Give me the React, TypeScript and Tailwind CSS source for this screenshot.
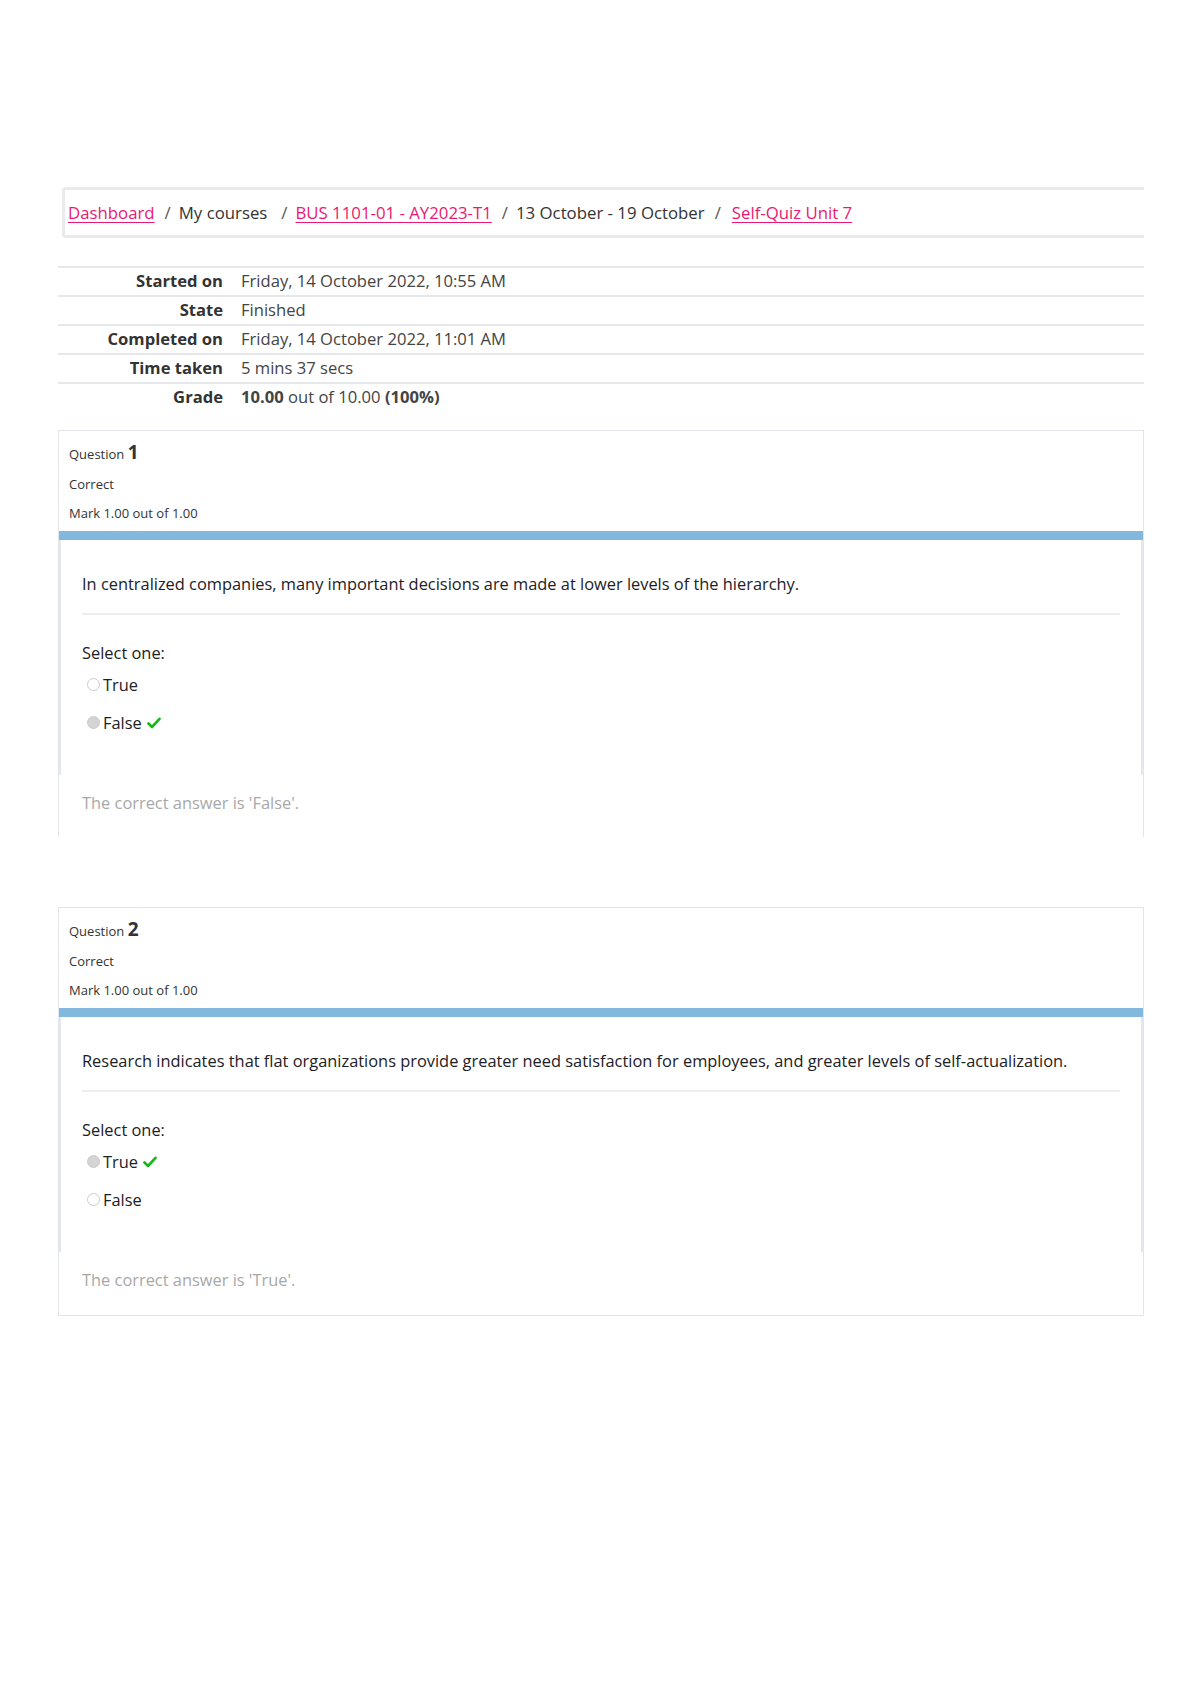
import React from 'react';

type Option = { label: string; checked: boolean; correct: boolean };

type Question = {
  number: number;
  text: string;
  options: Option[];
  answer: string;
  lastOnPage?: boolean;
};

const summary: { label: string; value: React.ReactNode }[] = [
  { label: 'Started on', value: 'Friday, 14 October 2022, 10:55 AM' },
  { label: 'State', value: 'Finished' },
  { label: 'Completed on', value: 'Friday, 14 October 2022, 11:01 AM' },
  { label: 'Time taken', value: '5 mins 37 secs' },
  {
    label: 'Grade',
    value: (
      <>
        <span className="font-bold">10.00</span> out of 10.00 <span className="font-bold">(100%)</span>
      </>
    ),
  },
];

const questions: Question[] = [
  {
    number: 1,
    text: 'In centralized companies, many important decisions are made at lower levels of the hierarchy.',
    options: [
      { label: 'True', checked: false, correct: false },
      { label: 'False', checked: true, correct: true },
    ],
    answer: "The correct answer is 'False'.",
    lastOnPage: true,
  },
  {
    number: 2,
    text: 'Research indicates that flat organizations provide greater need satisfaction for employees, and greater levels of self-actualization.',
    options: [
      { label: 'True', checked: true, correct: true },
      { label: 'False', checked: false, correct: false },
    ],
    answer: "The correct answer is 'True'.",
  },
];

const CheckMark = () => (
  <svg width="14" height="12" viewBox="0 0 14 12" className="ml-[5px]">
    <path d="M1.5 6.5 L5 10 L12.5 1.8" fill="none" stroke="#19b519" strokeWidth="2.6" strokeLinecap="round" strokeLinejoin="round" />
  </svg>
);

const Radio = ({ checked }: { checked: boolean }) => (
  <span
    className={`inline-block w-[13px] h-[13px] rounded-full border ${
      checked ? 'bg-[#d4d4d4] border-[#cacaca]' : 'bg-white border-[#cdcdcd]'
    }`}
  />
);

const Crumb = ({ children }: { children: React.ReactNode }) => (
  <a className="text-[#ec1870] underline underline-offset-[3px] decoration-[1px]">{children}</a>
);

const Sep = ({ before = 0, after = 0 }: { before?: number; after?: number }) => (
  <span className="text-[#555]" style={{ marginLeft: 10 + before, marginRight: 8 + after }}>
    /
  </span>
);

const QuestionCard = ({ q }: { q: Question }) => (
  <div className={`border border-[#e2e5e9] ${q.lastOnPage ? 'border-b-0 h-[407px]' : ''}`}>
    <div className="pl-[10px] pt-[7px] pb-[2px] text-[13px] text-[#333] leading-[29.5px]">
      <div>
        Question <span className="text-[19px] font-bold">{q.number}</span>
      </div>
      <div>Correct</div>
      <div>Mark 1.00 out of 1.00</div>
    </div>
    <div className="h-[9px] bg-[#82b8dd]" />
    <div className="border-x-2 border-[#e4e7eb] px-[21px] pt-[33px] pb-[14px] text-[16.4px] text-[#1d2125] leading-[22px]">
      <div className="pb-[18px] border-b-2 border-[#eceef1]">{q.text}</div>
      <div className="pt-[27px]">Select one:</div>
      <div className="pt-[10px] flex flex-col gap-[16px] pl-[5px]">
        {q.options.map((o) => (
          <div key={o.label} className="flex items-center h-[22px]">
            <Radio checked={o.checked} />
            <span className="ml-[3px]">{o.label}</span>
            {o.correct && <CheckMark />}
          </div>
        ))}
      </div>
      <div className="h-[27px]" />
    </div>
    <div className="px-[23px] pt-[17px] pb-[24px] text-[16.4px] leading-[22px] text-[#a8a8a8]">{q.answer}</div>
  </div>
);

export default function App() {
  return (
    <div className="min-h-[1698px] bg-white" style={{ fontFamily: '"Open Sans", "Noto Sans", sans-serif' }}>
      <div className="w-[1086px] ml-[58px] pt-[187px]">
        <div className="ml-[4px] h-[51px] flex items-center pl-[3px] border-[3px] border-r-0 border-[#e8eaed] rounded-l-[4px] text-[16.8px] text-[#333]">
          <Crumb>Dashboard</Crumb>
          <Sep />
          <span>My courses</span>
          <Sep before={4} />
          <Crumb>BUS 1101-01 - AY2023-T1</Crumb>
          <Sep />
          <span>13 October - 19 October</span>
          <Sep after={3} />
          <Crumb>Self-Quiz Unit 7</Crumb>
        </div>

        <div className="mt-[28px] text-[16.6px]">
          {summary.map((row) => (
            <div key={row.label} className="flex h-[29px] items-center border-t-2 border-[#e5e7eb]">
              <div className="w-[165px] text-right font-bold text-[#333]">{row.label}</div>
              <div className="pl-[18px] text-[#444]">{row.value}</div>
            </div>
          ))}
        </div>

        <div className="mt-[19px]">
          <QuestionCard q={questions[0]} />
        </div>
        <div className="mt-[70px]">
          <QuestionCard q={questions[1]} />
        </div>
      </div>
    </div>
  );
}
